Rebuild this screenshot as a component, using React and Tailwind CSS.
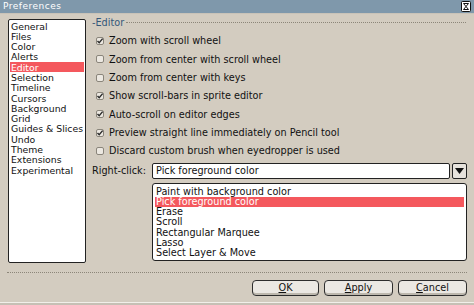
import React from 'react';

const sections = [
  'General', 'Files', 'Color', 'Alerts', 'Editor', 'Selection', 'Timeline', 'Cursors',
  'Background', 'Grid', 'Guides & Slices', 'Undo', 'Theme', 'Extensions', 'Experimental',
];

const options = [
  { label: 'Zoom with scroll wheel', checked: true },
  { label: 'Zoom from center with scroll wheel', checked: false },
  { label: 'Zoom from center with keys', checked: false },
  { label: 'Show scroll-bars in sprite editor', checked: true },
  { label: 'Auto-scroll on editor edges', checked: true },
  { label: 'Preview straight line immediately on Pencil tool', checked: true },
  { label: 'Discard custom brush when eyedropper is used', checked: false },
];

const rightClickActions = [
  'Paint with background color', 'Pick foreground color', 'Erase', 'Scroll',
  'Rectangular Marquee', 'Lasso', 'Select Layer & Move',
];

const CheckBox = ({ checked }) => (
  <svg width="8" height="8" viewBox="0 0 8 8" className="shrink-0">
    <rect x="0.5" y="0.5" width="7" height="7" rx="1.5" fill="#ece8e1" stroke="#8a857b" />
    {checked && <path d="M1.5 4 L3.2 5.8 L6.6 1.6" fill="none" stroke="#2a2a2a" strokeWidth="1.4" />}
  </svg>
);

const CloseButton = () => (
  <svg width="10" height="11" viewBox="0 0 10 11">
    <rect x="0.5" y="0.5" width="9" height="10" rx="1" fill="#ffffff" stroke="#111" />
    <path d="M2.5 2.5 L7.5 2.5 L5 5.5 Z M2.5 8.5 L7.5 8.5 L5 5.5 Z" fill="none" stroke="#111" strokeWidth="1" />
  </svg>
);

const Button = ({ children, width }) => (
  <button className={`${width} h-[16px] bg-[#ebe8e3] border border-[#2e2e2e] rounded-[4px] shadow-[inset_0_-2px_0_#bdb8ae] flex items-center justify-center leading-none`}>
    {children}
  </button>
);

export default function App() {
  return (
    <div className="w-[474px] h-[305px] bg-[#d3ccc0] flex flex-col overflow-hidden text-[9.7px] leading-none text-[#111] font-['DejaVu_Sans',Verdana,sans-serif]">
      {/* title bar */}
      <div className="h-[14px] bg-[#7f98ab] flex items-center justify-between pl-[3px] pr-[3px] border-b border-[#c9c3b8]">
        <span className="text-white text-[9px] tracking-[0.5px]">Preferences</span>
        <CloseButton />
      </div>

      {/* content */}
      <div className="flex gap-[6px] pl-[8px] pt-[5px]">
        <div className="w-[78px] h-[244px] bg-white border border-[#222] rounded-[2px] pt-[1px] px-[1px] text-[9.3px]">
          {sections.map((s) => (
            <div key={s} className={`h-[10.3px] flex items-center pl-[1px] whitespace-nowrap ${s === 'Editor' ? 'bg-[#f4585d] text-white' : ''}`}>
              {s}
            </div>
          ))}
        </div>

        <div className="w-[376px] flex flex-col">
          <div className="h-[7px] flex items-center gap-[2px]">
            <span className="text-[#34587a]">-Editor</span>
            <div className="flex-1 border-t border-dotted border-[#8c8679] mr-[2px]" />
          </div>

          <div className="mt-[6px] flex flex-col">
            {options.map((o) => (
              <div key={o.label} className="h-[18.33px] flex items-center gap-[5px] pl-[4px]">
                <CheckBox checked={o.checked} />
                <span className="whitespace-nowrap">{o.label}</span>
              </div>
            ))}
          </div>

          <div className="mt-[3px] h-[16px] flex items-center relative">
            <span className="w-[60px]">Right-click:</span>
            <div className="w-[298px] h-[16px] bg-white border border-[#222] rounded-[2px] flex items-center pl-[3px]">
              Pick foreground color
            </div>
            <div className="ml-[2px] w-[15px] h-[16px] bg-[#e6e2dc] border border-[#222] rounded-[2px] flex items-center justify-center">
              <svg width="9" height="6" viewBox="0 0 9 6"><path d="M0 0 H9 L4.5 6 Z" fill="#111" /></svg>
            </div>

            <div className="absolute left-[60px] top-[20px] w-[315px] h-[78px] bg-white border border-[#222] rounded-[3px] pt-[2px] px-[2px]">
              {rightClickActions.map((a) => (
                <div key={a} className={`h-[10.3px] flex items-center pl-[1px] ${a === 'Pick foreground color' ? 'bg-[#f4585d] text-white' : ''}`}>
                  {a}
                </div>
              ))}
            </div>
          </div>
        </div>
      </div>

      {/* separator */}
      <div className="mt-[9px] mx-[7px] border-t border-dotted border-[#8c8679]" />

      {/* buttons */}
      <div className="mt-[7px] flex justify-end gap-[5px] pr-[7px]">
        <Button width="w-[67px]"><span className="underline">O</span>K</Button>
        <Button width="w-[69px]"><span className="underline">A</span>pply</Button>
        <Button width="w-[69px]"><span className="underline">C</span>ancel</Button>
      </div>

      <div className="mt-auto h-[3px] border-t border-[#f2efe9] bg-[#c6c0b5]" />
    </div>
  );
}
